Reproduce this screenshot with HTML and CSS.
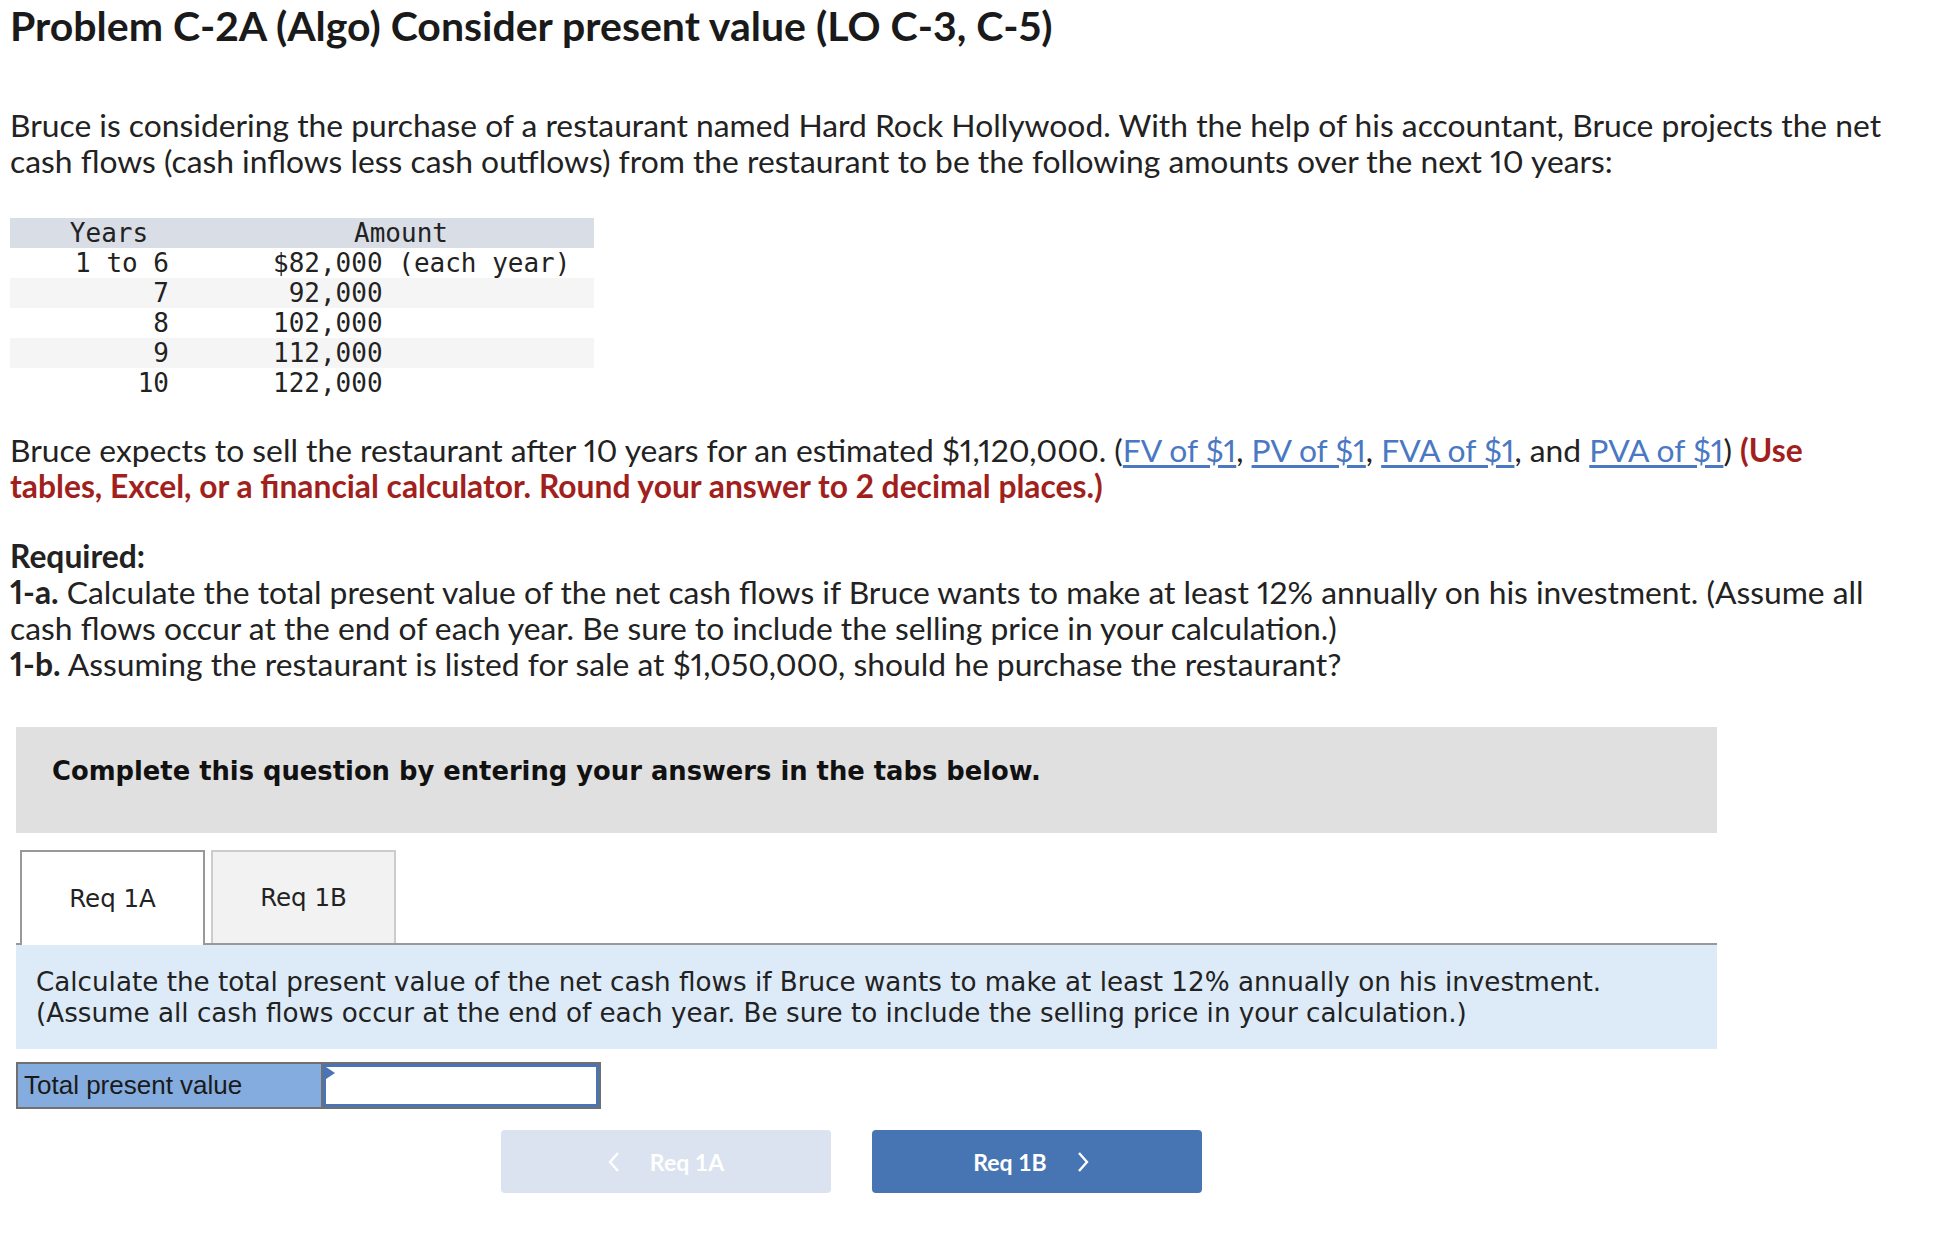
FILE: index.html
```html
<!DOCTYPE html>
<html lang="en">
<head>
<meta charset="utf-8">
<title>Problem C-2A</title>
<link rel="stylesheet" href="styles.css">
</head>
<body>
<div class="page">
  <h1 class="title">Problem C-2A (Algo) Consider present value (LO C-3, C-5)</h1>

  <p class="para intro">Bruce is considering the purchase of a restaurant named Hard Rock Hollywood. With the help of his accountant, Bruce projects the net cash flows (cash inflows less cash outflows) from the restaurant to be the following amounts over the next 10 years:</p>

  <table class="flows">
    <thead>
      <tr><th class="c-years">Years</th><th class="c-amt">Amount</th></tr>
    </thead>
    <tbody>
      <tr><td class="c-years">1 to 6</td><td class="c-amt">$82,000 (each year)</td></tr>
      <tr class="alt"><td class="c-years">7</td><td class="c-amt">&nbsp;92,000</td></tr>
      <tr><td class="c-years">8</td><td class="c-amt">102,000</td></tr>
      <tr class="alt"><td class="c-years">9</td><td class="c-amt">112,000</td></tr>
      <tr><td class="c-years">10</td><td class="c-amt">122,000</td></tr>
    </tbody>
  </table>

  <p class="para expects">Bruce expects to sell the restaurant after 10 years for an estimated $1,120,000. (<a href="#" class="lnk">FV of $1</a>, <a href="#" class="lnk">PV of $1</a>, <a href="#" class="lnk">FVA of $1</a>, and <a href="#" class="lnk">PVA of $1</a>) <strong class="warn">(Use tables, Excel, or a financial calculator. Round your answer to 2 decimal places.)</strong></p>

  <div class="para required">
    <div><strong>Required:</strong></div>
    <div><strong>1-a.</strong> Calculate the total present value of the net cash flows if Bruce wants to make at least 12% annually on his investment. (Assume all cash flows occur at the end of each year. Be sure to include the selling price in your calculation.)</div>
    <div><strong>1-b.</strong> Assuming the restaurant is listed for sale at $1,050,000, should he purchase the restaurant?</div>
  </div>

  <div class="work">
    <div class="banner">Complete this question by entering your answers in the tabs below.</div>

    <div class="tabs">
      <div class="tab active">Req 1A</div>
      <div class="tab">Req 1B</div>
    </div>

    <div class="info">Calculate the total present value of the net cash flows if Bruce wants to make at least 12% annually on his investment. (Assume all cash flows occur at the end of each year. Be sure to include the selling price in your calculation.)</div>

    <div class="answer">
      <div class="answer-label">Total present value</div>
      <div class="answer-input"><span class="marker"></span></div>
    </div>

    <div class="nav">
      <button class="btn prev"><svg class="chev" viewBox="0 0 12 22" width="12" height="22"><polyline points="10,2 2,11 10,20" fill="none" stroke="#fff" stroke-width="2.4"/></svg><span>Req 1A</span></button>
      <button class="btn next"><span>Req 1B</span><svg class="chev" viewBox="0 0 12 22" width="12" height="22"><polyline points="2,2 10,11 2,20" fill="none" stroke="#fff" stroke-width="2.4"/></svg></button>
    </div>
  </div>
</div>
</body>
</html>
```

FILE: styles.css
```css
html, body {
  margin: 0;
  padding: 0;
  background: #fff;
}

body {
  padding: 8px;
  color: #222;
  font-family: "Lato", "Noto Sans", sans-serif;
  font-variant-numeric: proportional-nums;
}

.page {
  width: 1940px;
}

.title {
  margin: 0 0 0 2px;
  font-size: 41px;
  line-height: 36px;
  font-weight: 700;
  color: #1a1a1a;
}

.para {
  margin: 0;
  font-size: 31.8px;
  line-height: 36px;
  padding-left: 2px;
}

.intro {
  margin-top: 63px;
  width: 1900px;
}

.flows {
  margin-top: 39px;
  margin-left: 2px;
  border-collapse: collapse;
  font-family: "DejaVu Sans Mono", monospace;
  font-size: 26px;
  font-variant-numeric: normal;
  color: #222;
}

.flows th,
.flows td {
  padding: 0;
  height: 30px;
  line-height: 30px;
  font-weight: 400;
  white-space: pre;
}

.flows thead tr {
  background: #d9dde6;
}

.flows tr.alt {
  background: #f5f5f5;
}

.flows .c-years {
  width: 159px;
  padding-right: 39px;
  text-align: right;
}

.flows th.c-years {
  text-align: center;
  padding-right: 0;
  width: 198px;
}

.flows .c-amt {
  width: 321px;
  padding-left: 65px;
  text-align: left;
}

.flows th.c-amt {
  text-align: center;
  padding-left: 0;
  width: 386px;
}

.expects {
  margin-top: 34px;
  width: 1815px;
}

.lnk {
  color: #4a78c2;
  text-decoration: underline;
  text-underline-offset: 3px;
}

.warn {
  color: #a11f1d;
}

.required {
  margin-top: 34px;
  width: 1900px;
}

.work {
  margin-top: 45px;
  margin-left: 8px;
  width: 1701px;
  font-family: "DejaVu Sans", Verdana, sans-serif;
}

.banner {
  background: #e0e0e0;
  height: 106px;
  box-sizing: border-box;
  padding: 29px 0 0 36px;
  font-size: 25.8px;
  line-height: 30px;
  font-weight: 700;
  color: #111;
}

.tabs {
  display: flex;
  gap: 6px;
  margin-top: 17px;
  padding-left: 4px;
  border-bottom: 2px solid #999;
  height: 93px;
}

.tab {
  width: 185px;
  height: 93px;
  box-sizing: border-box;
  display: flex;
  align-items: center;
  justify-content: center;
  font-size: 24.5px;
  color: #222;
  border: 2px solid #ccc;
  border-bottom: none;
  background: #f2f2f2;
}

.tab.active {
  background: #fff;
  border-color: #999;
  height: 95px;
  margin-bottom: -2px;
}

.info {
  background: #ddebf8;
  padding: 22px 20px 20px 20px;
  font-size: 26.2px;
  line-height: 31px;
  color: #222;
}

.answer {
  display: flex;
  margin-top: 13px;
  width: 585px;
  height: 47px;
  box-sizing: border-box;
  border: 2px solid #707070;
}

.answer-label {
  width: 305px;
  background: #84acdf;
  border-right: 2px solid #707070;
  font-family: "Liberation Sans", Arial, sans-serif;
  font-size: 26px;
  display: flex;
  align-items: center;
  padding-left: 6px;
  box-sizing: border-box;
  color: #1a1a1a;
}

.answer-input {
  flex: 1;
  position: relative;
  background: #fff;
  border: 3px solid #4a74b4;
}

.marker {
  position: absolute;
  left: 0;
  top: 0;
  width: 0;
  height: 0;
  border-top: 6px solid transparent;
  border-bottom: 6px solid transparent;
  border-left: 9px solid #4a74b4;
}

.nav {
  display: flex;
  gap: 41px;
  margin-top: 21px;
  padding-left: 485px;
}

.btn {
  width: 330px;
  height: 63px;
  border: none;
  border-radius: 4px;
  display: flex;
  align-items: center;
  justify-content: center;
  gap: 30px;
  font-family: "Lato", sans-serif;
  font-weight: 700;
  font-size: 23px;
  color: #fff;
  padding: 0;
}

.btn.prev {
  background: #dae3ef;
}

.btn.next {
  background: #4775b3;
  padding-right: 12px;
}
```
